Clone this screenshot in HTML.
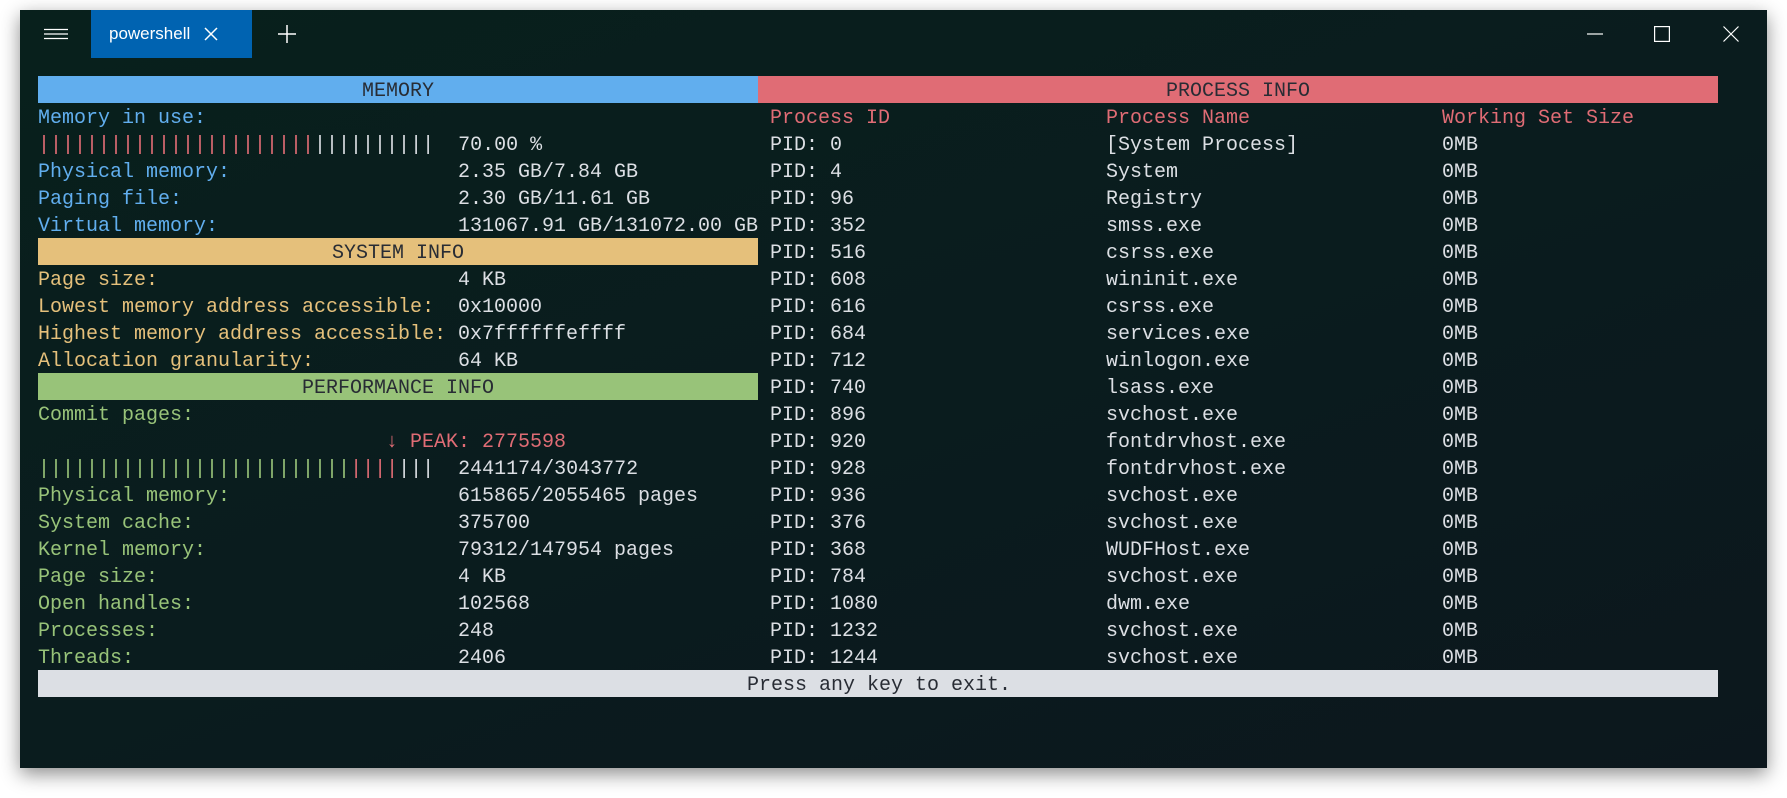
<!DOCTYPE html>
<html><head><meta charset="utf-8"><style>
*{margin:0;padding:0;box-sizing:border-box}
body{width:1787px;height:798px;background:#fff;position:relative;overflow:hidden;font-family:"Liberation Mono","DejaVu Sans Mono",monospace}
#win{position:absolute;left:20px;top:10px;width:1747px;height:758px;background:linear-gradient(160deg,#08201c 0%,#0a1c1e 50%,#0c171d 100%);box-shadow:0 6px 18px rgba(0,0,0,.45)}
.tab{position:absolute;left:71px;top:0;width:161px;height:48px;background:#0063b1;color:#fff;font-family:"Liberation Sans",sans-serif;font-size:17px;line-height:48px;padding-left:18px}
.r{position:absolute;height:27px;line-height:27px;padding-top:2px;font-size:20px;white-space:pre;color:#dcdfe4}
.bar{position:absolute;height:27px;line-height:27px;padding-top:2px;font-size:20px;text-align:center;color:#282c34;white-space:pre}
.b{color:#61aeee}.y{color:#e5c07b}.g{color:#98c379}.rd{color:#e06c75}.w{color:#dcdfe4}
</style></head><body>
<div id="win">
<svg style="position:absolute;left:23px;top:18px" width="26" height="12"><path d="M1 1.5H25M1 6H25M1 10.5H25" stroke="#fff" stroke-width="1.3"/></svg>
<div class="tab">powershell<svg style="position:absolute;left:113px;top:17px" width="14" height="14"><path d="M1 1L13 13M13 1L1 13" stroke="#fff" stroke-width="1.5"/></svg></div>
<svg style="position:absolute;left:258px;top:15px" width="18" height="18"><path d="M9 0V18M0 9H18" stroke="#fff" stroke-width="1.5"/></svg>
<svg style="position:absolute;left:1567px;top:23px" width="16" height="3"><path d="M0 1H16" stroke="#fff" stroke-width="1.2"/></svg>
<svg style="position:absolute;left:1634px;top:16px" width="16" height="16"><rect x="0.6" y="0.6" width="14.8" height="14.8" fill="none" stroke="#fff" stroke-width="1.2"/></svg>
<svg style="position:absolute;left:1703px;top:16px" width="16" height="16"><path d="M0.5 0.5L15.5 15.5M15.5 0.5L0.5 15.5" stroke="#fff" stroke-width="1.2"/></svg>
</div>
<div class="bar" style="left:38px;top:76px;width:720px;background:#61aeee">MEMORY</div>
<div class="bar" style="left:758px;top:76px;width:960px;background:#e06c75">PROCESS INFO</div>
<div class="r b" style="left:38px;top:103px">Memory in use:</div>
<div class="r" style="left:38px;top:130px"><span class="rd">|||||||||||||||||||||||</span><span class="w">||||||||||</span>  70.00 %</div>
<div class="r b" style="left:38px;top:157px">Physical memory:</div><div class="r" style="left:458px;top:157px">2.35 GB/7.84 GB</div>
<div class="r b" style="left:38px;top:184px">Paging file:</div><div class="r" style="left:458px;top:184px">2.30 GB/11.61 GB</div>
<div class="r b" style="left:38px;top:211px">Virtual memory:</div><div class="r" style="left:458px;top:211px">131067.91 GB/131072.00 GB</div>
<div class="bar" style="left:38px;top:238px;width:720px;background:#e5c07b">SYSTEM INFO</div>
<div class="r y" style="left:38px;top:265px">Page size:</div><div class="r" style="left:458px;top:265px">4 KB</div>
<div class="r y" style="left:38px;top:292px">Lowest memory address accessible:</div><div class="r" style="left:458px;top:292px">0x10000</div>
<div class="r y" style="left:38px;top:319px">Highest memory address accessible:</div><div class="r" style="left:458px;top:319px">0x7ffffffeffff</div>
<div class="r y" style="left:38px;top:346px">Allocation granularity:</div><div class="r" style="left:458px;top:346px">64 KB</div>
<div class="bar" style="left:38px;top:373px;width:720px;background:#98c379">PERFORMANCE INFO</div>
<div class="r g" style="left:38px;top:400px">Commit pages:</div>
<div class="r rd" style="left:386px;top:427px">↓ PEAK: 2775598</div>
<div class="r" style="left:38px;top:454px"><span class="g">||||||||||||||||||||||||||</span><span class="rd">||||</span><span class="w">|||</span>  2441174/3043772</div>
<div class="r g" style="left:38px;top:481px">Physical memory:</div><div class="r" style="left:458px;top:481px">615865/2055465 pages</div>
<div class="r g" style="left:38px;top:508px">System cache:</div><div class="r" style="left:458px;top:508px">375700</div>
<div class="r g" style="left:38px;top:535px">Kernel memory:</div><div class="r" style="left:458px;top:535px">79312/147954 pages</div>
<div class="r g" style="left:38px;top:562px">Page size:</div><div class="r" style="left:458px;top:562px">4 KB</div>
<div class="r g" style="left:38px;top:589px">Open handles:</div><div class="r" style="left:458px;top:589px">102568</div>
<div class="r g" style="left:38px;top:616px">Processes:</div><div class="r" style="left:458px;top:616px">248</div>
<div class="r g" style="left:38px;top:643px">Threads:</div><div class="r" style="left:458px;top:643px">2406</div>
<div class="r rd" style="left:770px;top:103px">Process ID</div><div class="r rd" style="left:1106px;top:103px">Process Name</div><div class="r rd" style="left:1442px;top:103px">Working Set Size</div>
<div class="bar" style="left:38px;top:670px;width:1680px;background:#dcdfe4;text-align:left;padding-left:709px">Press any key to exit.</div>
<div class="r" style="left:770px;top:130px">PID: 0</div><div class="r" style="left:1106px;top:130px">[System Process]</div><div class="r" style="left:1442px;top:130px">0MB</div>
<div class="r" style="left:770px;top:157px">PID: 4</div><div class="r" style="left:1106px;top:157px">System</div><div class="r" style="left:1442px;top:157px">0MB</div>
<div class="r" style="left:770px;top:184px">PID: 96</div><div class="r" style="left:1106px;top:184px">Registry</div><div class="r" style="left:1442px;top:184px">0MB</div>
<div class="r" style="left:770px;top:211px">PID: 352</div><div class="r" style="left:1106px;top:211px">smss.exe</div><div class="r" style="left:1442px;top:211px">0MB</div>
<div class="r" style="left:770px;top:238px">PID: 516</div><div class="r" style="left:1106px;top:238px">csrss.exe</div><div class="r" style="left:1442px;top:238px">0MB</div>
<div class="r" style="left:770px;top:265px">PID: 608</div><div class="r" style="left:1106px;top:265px">wininit.exe</div><div class="r" style="left:1442px;top:265px">0MB</div>
<div class="r" style="left:770px;top:292px">PID: 616</div><div class="r" style="left:1106px;top:292px">csrss.exe</div><div class="r" style="left:1442px;top:292px">0MB</div>
<div class="r" style="left:770px;top:319px">PID: 684</div><div class="r" style="left:1106px;top:319px">services.exe</div><div class="r" style="left:1442px;top:319px">0MB</div>
<div class="r" style="left:770px;top:346px">PID: 712</div><div class="r" style="left:1106px;top:346px">winlogon.exe</div><div class="r" style="left:1442px;top:346px">0MB</div>
<div class="r" style="left:770px;top:373px">PID: 740</div><div class="r" style="left:1106px;top:373px">lsass.exe</div><div class="r" style="left:1442px;top:373px">0MB</div>
<div class="r" style="left:770px;top:400px">PID: 896</div><div class="r" style="left:1106px;top:400px">svchost.exe</div><div class="r" style="left:1442px;top:400px">0MB</div>
<div class="r" style="left:770px;top:427px">PID: 920</div><div class="r" style="left:1106px;top:427px">fontdrvhost.exe</div><div class="r" style="left:1442px;top:427px">0MB</div>
<div class="r" style="left:770px;top:454px">PID: 928</div><div class="r" style="left:1106px;top:454px">fontdrvhost.exe</div><div class="r" style="left:1442px;top:454px">0MB</div>
<div class="r" style="left:770px;top:481px">PID: 936</div><div class="r" style="left:1106px;top:481px">svchost.exe</div><div class="r" style="left:1442px;top:481px">0MB</div>
<div class="r" style="left:770px;top:508px">PID: 376</div><div class="r" style="left:1106px;top:508px">svchost.exe</div><div class="r" style="left:1442px;top:508px">0MB</div>
<div class="r" style="left:770px;top:535px">PID: 368</div><div class="r" style="left:1106px;top:535px">WUDFHost.exe</div><div class="r" style="left:1442px;top:535px">0MB</div>
<div class="r" style="left:770px;top:562px">PID: 784</div><div class="r" style="left:1106px;top:562px">svchost.exe</div><div class="r" style="left:1442px;top:562px">0MB</div>
<div class="r" style="left:770px;top:589px">PID: 1080</div><div class="r" style="left:1106px;top:589px">dwm.exe</div><div class="r" style="left:1442px;top:589px">0MB</div>
<div class="r" style="left:770px;top:616px">PID: 1232</div><div class="r" style="left:1106px;top:616px">svchost.exe</div><div class="r" style="left:1442px;top:616px">0MB</div>
<div class="r" style="left:770px;top:643px">PID: 1244</div><div class="r" style="left:1106px;top:643px">svchost.exe</div><div class="r" style="left:1442px;top:643px">0MB</div>
</body></html>
